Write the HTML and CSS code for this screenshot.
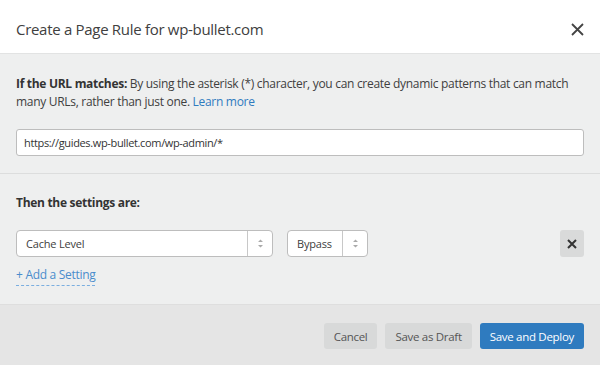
FILE: index.html
```html
<!DOCTYPE html>
<html lang="en">
<head>
    <meta charset="UTF-8">
    <title>Create a Page Rule</title>
    <link rel="stylesheet" href="styles.css">
</head>
<body>
    <div class="modal">
        <div class="modal-header">
            <h2>Create a Page Rule for wp-bullet.com</h2>
            <button class="close-btn" aria-label="Close">
                <svg width="13" height="13" viewBox="0 0 13 13"><path d="M1 1 L12 12 M12 1 L1 12" stroke="#444" stroke-width="1.8" fill="none"/></svg>
            </button>
        </div>

        <div class="section url-section">
            <p class="intro"><strong>If the URL matches:</strong> By using the asterisk (*) character, you can create dynamic patterns that can match many URLs, rather than just one. <a href="#">Learn more</a></p>
            <input type="text" class="url-input" value="https://guides.wp-bullet.com/wp-admin/*">
        </div>

        <div class="section settings-section">
            <h3>Then the settings are:</h3>
            <div class="setting-row">
                <div class="select select-wide">
                    <span class="select-value">Cache Level</span>
                    <span class="select-arrows">
                        <svg width="7" height="11" viewBox="0 0 7 11"><path d="M1 4 L3.5 1.5 L6 4 Z M1 7 L3.5 9.5 L6 7 Z" fill="#aaa"/></svg>
                    </span>
                </div>
                <div class="select select-small">
                    <span class="select-value">Bypass</span>
                    <span class="select-arrows">
                        <svg width="7" height="11" viewBox="0 0 7 11"><path d="M1 4 L3.5 1.5 L6 4 Z M1 7 L3.5 9.5 L6 7 Z" fill="#aaa"/></svg>
                    </span>
                </div>
                <button class="remove-btn" aria-label="Remove">
                    <svg width="10" height="10" viewBox="0 0 10 10"><path d="M1 1 L9 9 M9 1 L1 9" stroke="#333" stroke-width="2" fill="none"/></svg>
                </button>
            </div>
            <a href="#" class="add-setting">+ Add a Setting</a>
        </div>

        <div class="modal-footer">
            <button class="btn btn-grey">Cancel</button>
            <button class="btn btn-grey">Save as Draft</button>
            <button class="btn btn-blue">Save and Deploy</button>
        </div>
    </div>
</body>
</html>
```

FILE: styles.css
```css
* {
    margin: 0;
    padding: 0;
    box-sizing: border-box;
}

body {
    font-family: 'Open Sans', sans-serif;
    width: 600px;
    height: 365px;
    background-color: #eeefef;
    color: #404040;
}

.modal {
    display: flex;
    flex-direction: column;
    height: 365px;
}

.modal-header {
    background-color: #ffffff;
    height: 54px;
    display: flex;
    align-items: center;
    justify-content: space-between;
    padding: 0 15px 0 16px;
    border-bottom: 1px solid #e2e3e3;
}

.modal-header h2 {
    font-size: 15px;
    font-weight: 400;
    letter-spacing: -0.3px;
    color: #404040;
    margin-top: 4px;
}

.close-btn {
    background: none;
    border: none;
    width: 16px;
    height: 16px;
    display: flex;
    align-items: center;
    justify-content: center;
    margin-top: 5px;
}

.section {
    background-color: #eeefef;
    padding: 0 16px;
}

.url-section {
    padding-top: 21px;
    height: 120px;
    border-bottom: 1px solid #dcdddd;
}

.intro {
    font-size: 12px;
    letter-spacing: -0.3px;
    line-height: 18px;
    color: #404040;
}

.intro strong {
    font-weight: 700;
    color: #333;
}

.intro a {
    color: #2f7bbf;
    text-decoration: none;
}

.url-input {
    display: block;
    width: 568px;
    height: 27px;
    margin-top: 18px;
    padding: 0 7px;
    border: 1px solid #bdbdbd;
    border-radius: 3px;
    background-color: #ffffff;
    font-family: 'Open Sans', sans-serif;
    font-size: 11px;
    letter-spacing: -0.35px;
    color: #333;
    outline: none;
}

.settings-section {
    padding-top: 20px;
    height: 131px;
    border-bottom: 1px solid #dedede;
}

.settings-section h3 {
    font-size: 12px;
    letter-spacing: -0.3px;
    font-weight: 700;
    color: #333;
    line-height: 18px;
}

.setting-row {
    display: flex;
    align-items: center;
    margin-top: 18px;
}

.select {
    display: flex;
    height: 27px;
    background-color: #ffffff;
    border: 1px solid #bdbdbd;
    border-radius: 4px;
    font-size: 11px;
    letter-spacing: -0.2px;
    color: #404040;
}

.select-value {
    flex: 1;
    display: flex;
    align-items: center;
    padding-left: 9px;
}

.select-arrows {
    width: 25px;
    border-left: 1px solid #c8c8c8;
    display: flex;
    align-items: center;
    justify-content: center;
}

.select-wide {
    width: 257px;
}

.select-small {
    width: 81px;
    margin-left: 14px;
}

.remove-btn {
    margin-left: auto;
    width: 24px;
    height: 27px;
    background-color: #d9dada;
    border: none;
    border-radius: 3px;
    display: flex;
    align-items: center;
    justify-content: center;
}

.add-setting {
    display: inline-block;
    margin-top: 9px;
    font-size: 12px;
    letter-spacing: -0.3px;
    color: #4a8ccc;
    text-decoration: none;
    padding-bottom: 1px;
    border-bottom: 1px dashed #7aaee0;
    line-height: 18px;
}

.modal-footer {
    flex: 1;
    background-color: #e5e5e5;
    display: flex;
    justify-content: flex-end;
    align-items: flex-start;
    gap: 8px;
    padding: 18px 16px 0 0;
}

.btn {
    height: 26px;
    padding: 0 10px;
    border: none;
    border-radius: 3px;
    font-family: 'Open Sans', sans-serif;
    font-size: 11.5px;
    letter-spacing: -0.3px;
    cursor: pointer;
}

.btn-grey {
    background-color: #d8d9d9;
    color: #555;
}

.btn-blue {
    background-color: #2f7bbf;
    color: #ffffff;
}
```
